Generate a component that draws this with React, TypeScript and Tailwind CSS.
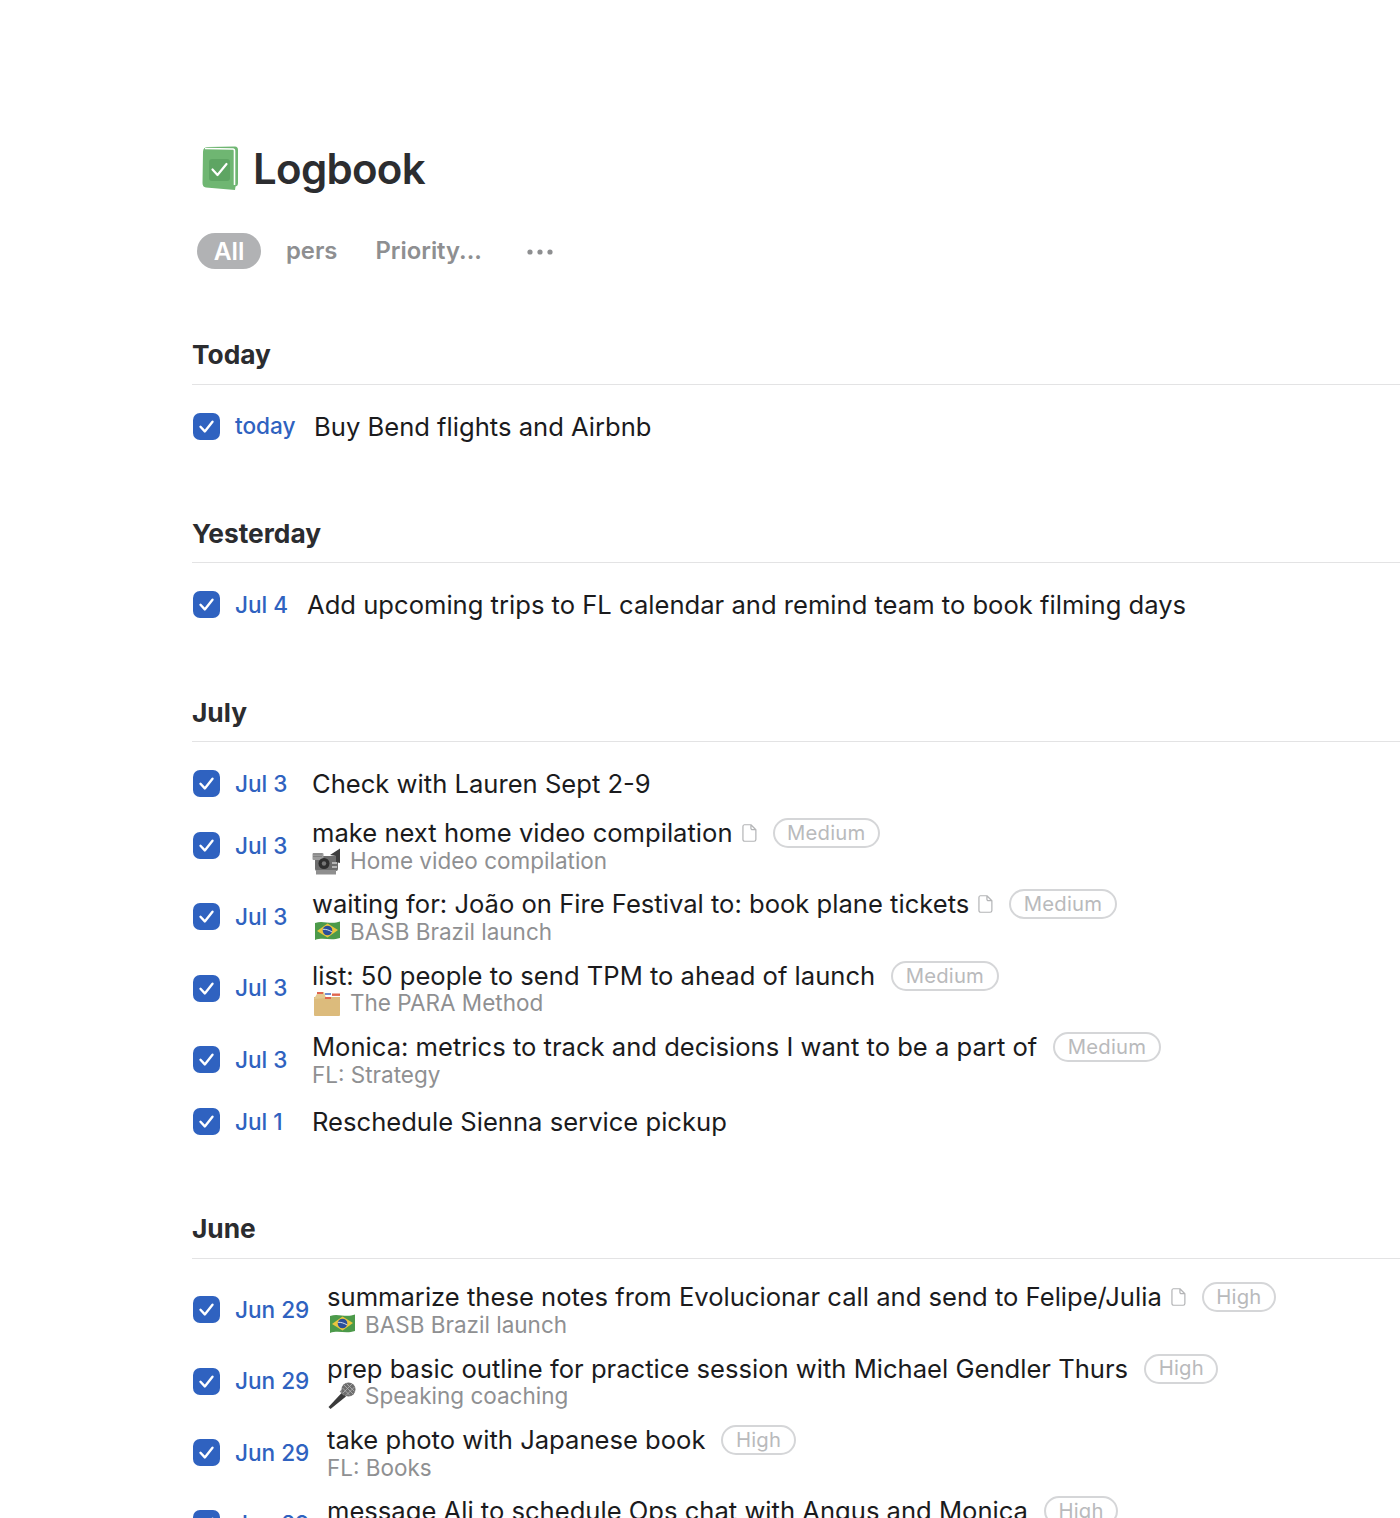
import React from "react";

const Check = () => (
  <span className="flex h-[27px] w-[27px] shrink-0 items-center justify-center rounded-[7px] bg-[#2f62c0]">
    <svg width="17" height="17" viewBox="0 0 17 17" fill="none">
      <path d="M2.500 8.800 L6.800 13.400 L14.500 3.800" stroke="white" strokeWidth="2.400" strokeLinecap="round" strokeLinejoin="round" />
    </svg>
  </span>
);

const Doc = () => (
  <svg width="15" height="20" viewBox="0 0 16 20" fill="none" className="ml-[9px] shrink-0">
    <path d="M2.500 1.200 H9.500 L14.800 6.500 V17 A1.800 1.800 0 0 1 13 18.800 H2.800 A1.800 1.800 0 0 1 1 17 V3 A1.800 1.800 0 0 1 2.500 1.200 Z M9.500 1.200 V5 A1.500 1.500 0 0 0 11 6.500 H14.800" stroke="#b4b5b7" strokeWidth="1.300" strokeLinejoin="round" />
  </svg>
);

const Badge = ({ label }: { label: string }) => (
  <span className="ml-[16px] flex h-[30px] shrink-0 items-center rounded-full border-2 border-[#d5d6d8] px-[12.500px] text-[20.300px] tracking-[0.2px] text-[#b9babc]">
    {label}
  </span>
);

const Camera = () => (
  <svg width="30" height="28" viewBox="0 0 30 28" className="shrink-0">
    <rect x="3" y="9" width="23" height="15" rx="2" fill="#6d6d6d" />
    <rect x="4" y="23" width="20" height="4.500" fill="#8f8f8f" />
    <rect x="0.500" y="6" width="11" height="7" rx="1" fill="#9c9c9c" />
    <path d="M18 8 L28 1.500 V16 L24 15 L24 9 Z" fill="#3e3e3e" />
    <circle cx="12" cy="16.500" r="5.500" fill="#2e2e2e" />
    <circle cx="12" cy="16.500" r="2.200" fill="#777" />
    <rect x="20" y="15" width="5" height="2" fill="#b5b5b5" />
    <rect x="20" y="19" width="5" height="2" fill="#b5b5b5" />
    <path d="M1 7 H10 M1 9.500 H10" stroke="#7c7c7c" strokeWidth="0.800" />
  </svg>
);

const Flag = () => (
  <svg width="30" height="28" viewBox="0 0 30 28" className="shrink-0">
    <path d="M3 5 C11 2 19 7 28 3.500 V20 C19 23 11 19 3 22 Z" fill="#4c9a4a" />
    <path d="M5 13 L15.500 5.500 L26 12 L15.500 19.500 Z" fill="#e9c53e" />
    <circle cx="15.500" cy="12.500" r="4.800" fill="#2b4f9a" />
    <path d="M11 11.300 C14 11.100 17 12.100 20 13.900" stroke="#e7eef5" strokeWidth="0.900" fill="none" />
  </svg>
);

const Folder = () => (
  <svg width="30" height="28" viewBox="0 0 30 28" className="shrink-0">
    <path d="M2 8 H28 V26 A1 1 0 0 1 27 27 H3 A1 1 0 0 1 2 26 Z" fill="#dcbb7c" />
    <path d="M2 10 L6 3 H12 L14 9 Z" fill="#e3c88f" />
    <rect x="5" y="3" width="6" height="2" fill="#e0664e" />
    <rect x="13" y="4" width="6" height="2" fill="#6f8fd0" />
    <rect x="20" y="4.500" width="8" height="2.400" fill="#e0664e" />
    <rect x="13" y="8" width="6" height="2" fill="#e0664e" />
  </svg>
);

const Mic = () => (
  <svg width="30" height="28" viewBox="0 0 30 28" className="shrink-0">
    <path d="M3.500 27 L1.500 25 L15 10.500 L19 14.500 Z" fill="#3a3a3a" />
    <rect x="12.800" y="9.200" width="5.500" height="2.600" transform="rotate(45 15.500 10.500)" fill="#8c8c8c" />
    <circle cx="21.500" cy="7.500" r="7" fill="#6e6e6e" />
    <path d="M17 3 L26 12 M19.500 1.500 L27.500 9.500 M15.500 6 L23 13.500 M25 2 L16 11 M27.500 5 L19 13.500" stroke="#b5b5b5" strokeWidth="0.800" />
  </svg>
);

type Sub = { icon?: React.ReactNode; text: string };
type Item = { date: string; title: string; doc?: boolean; badge?: string; sub?: Sub };

const Row = ({ item, titleX }: { item: Item; titleX: string }) => (
  <div className={item.sub ? "flex h-[71.400px] items-center" : "flex h-[52.600px] items-center"}>
    <div className="-mt-px ml-px flex shrink-0 items-center">
      <Check />
    </div>
    <span className={`-mt-px ml-[15px] shrink-0 text-[22.600px] font-medium text-[#2f62c0] ${titleX}`}>{item.date}</span>
    <div className="min-w-0 flex-col">
      <div className="flex h-[30px] items-center">
        <span className="whitespace-nowrap text-[25.600px] leading-[30px] text-[#1b1b1d]">{item.title}</span>
        {item.doc && <Doc />}
        {item.badge && <Badge label={item.badge} />}
      </div>
      {item.sub && (
        <div className="-mt-px flex h-[27px] items-center whitespace-nowrap text-[22.500px] text-[#8f9092]">
          {item.sub.icon && <span className="mr-[8px] flex w-[30px] shrink-0 items-center">{item.sub.icon}</span>}
          <span>{item.sub.text}</span>
        </div>
      )}
    </div>
  </div>
);

const Section = ({ heading, items, titleX }: { heading: string; items: Item[]; titleX: string }) => (
  <section className="mb-[52px]">
    <h2 className="flex h-[58px] items-center border-b border-[#e3e3e4] text-[26.300px] font-bold text-[#2b2c2f]">
      {heading}
    </h2>
    <div className="pt-4">
      {items.map((it, i) => (
        <Row key={i} item={it} titleX={titleX} />
      ))}
    </div>
  </section>
);

const brazil: Sub = { icon: <Flag />, text: "BASB Brazil launch" };

export default function App() {
  return (
    <div className="h-[1518px] overflow-hidden bg-white pl-[192px] pt-[138px] font-['Inter','Liberation_Sans',sans-serif]">
      <header className="flex h-[60px] items-center pl-[10px]">
        <svg width="36" height="46" viewBox="0 0 36 46" className="shrink-0">
          <path d="M1 7 Q1 2 6 2 L33 1.500 Q36 1.500 36 5 V38 Q36 41 33.500 41.500 L33 45 L4 42.500 Q0.500 42 0.500 38 Z" fill="#6fb672" />
          <path d="M3 3.500 L31 4 Q32.500 4 32.500 6 V40" stroke="white" strokeWidth="1.600" fill="none" />
          <rect x="7" y="14" width="21" height="22" rx="3" fill="#5ea563" />
          <path d="M10.500 24.500 L15.500 30 L24.500 19" stroke="white" strokeWidth="2.200" fill="none" strokeLinecap="round" strokeLinejoin="round" />
        </svg>
        <h1 className="ml-[15px] text-[42px] font-semibold tracking-[-0.700px] text-[#2c2d30]">Logbook</h1>
      </header>

      <nav className="mt-[35px] flex h-[36px] items-center pl-[5px] text-[23.800px] font-semibold text-[#8e8f91]">
        <span className="flex h-[36px] w-[64px] items-center justify-center rounded-full bg-[#b1b2b4] text-[24.500px] font-semibold text-white">All</span>
        <span className="ml-[25px]">pers</span>
        <span className="ml-[38px]">Priority...</span>
        <svg width="26" height="6" viewBox="0 0 26 6" className="ml-[45px] mt-[2px]">
          <circle cx="3" cy="3" r="2.600" fill="#8e8f91" />
          <circle cx="13" cy="3" r="2.600" fill="#8e8f91" />
          <circle cx="23" cy="3" r="2.600" fill="#8e8f91" />
        </svg>
      </nav>

      <div className="mt-[57.600px]">
        <Section
          heading="Today"
          titleX="w-[79px]"
          items={[{ date: "today", title: "Buy Bend flights and Airbnb" }]}
        />
        <Section
          heading="Yesterday"
          titleX="w-[72px]"
          items={[{ date: "Jul 4", title: "Add upcoming trips to FL calendar and remind team to book filming days" }]}
        />
        <Section
          heading="July"
          titleX="w-[77px]"
          items={[
            { date: "Jul 3", title: "Check with Lauren Sept 2-9" },
            { date: "Jul 3", title: "make next home video compilation", doc: true, badge: "Medium", sub: { icon: <Camera />, text: "Home video compilation" } },
            { date: "Jul 3", title: "waiting for: João on Fire Festival to: book plane tickets", doc: true, badge: "Medium", sub: brazil },
            { date: "Jul 3", title: "list: 50 people to send TPM to ahead of launch", badge: "Medium", sub: { icon: <Folder />, text: "The PARA Method" } },
            { date: "Jul 3", title: "Monica: metrics to track and decisions I want to be a part of", badge: "Medium", sub: { text: "FL: Strategy" } },
            { date: "Jul 1", title: "Reschedule Sienna service pickup" },
          ]}
        />
        <Section
          heading="June"
          titleX="w-[92px]"
          items={[
            { date: "Jun 29", title: "summarize these notes from Evolucionar call and send to Felipe/Julia", doc: true, badge: "High", sub: brazil },
            { date: "Jun 29", title: "prep basic outline for practice session with Michael Gendler Thurs", badge: "High", sub: { icon: <Mic />, text: "Speaking coaching" } },
            { date: "Jun 29", title: "take photo with Japanese book", badge: "High", sub: { text: "FL: Books" } },
            { date: "Jun 29", title: "message Ali to schedule Ops chat with Angus and Monica", badge: "High", sub: { text: "FL: Operations" } },
          ]}
        />
      </div>
    </div>
  );
}
